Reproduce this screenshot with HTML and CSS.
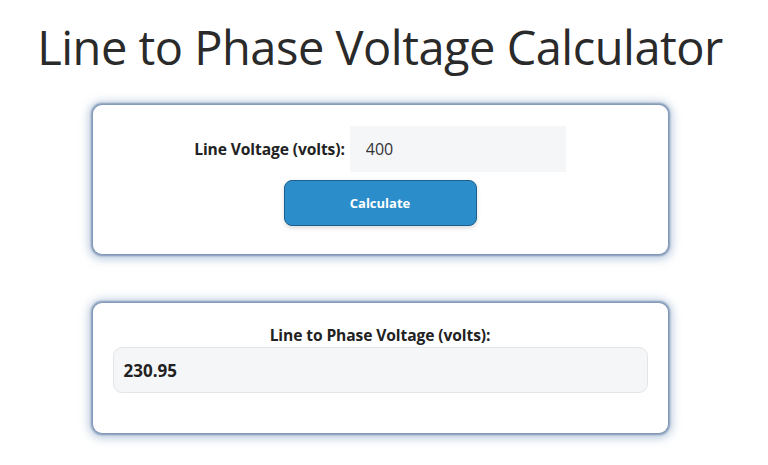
FILE: index.html
```html
<!DOCTYPE html>
<html>
<head>
<meta charset="utf-8">
<link rel="stylesheet" href="styles.css">
</head>
<body>
<h1 class="title">Line to Phase Voltage Calculator</h1>
<div class="card input-card">
  <div class="row">
    <label class="label" for="lv">Line Voltage (volts):</label>
    <input id="lv" class="field" type="text" value="400">
  </div>
  <button class="btn">Calculate</button>
</div>
<div class="card result-card">
  <div class="result-label">Line to Phase Voltage (volts):</div>
  <div class="result-box">230.95</div>
</div>
</body>
</html>
```
FILE: styles.css
```css
html, body {
  margin: 0;
  padding: 0;
  background: #ffffff;
}
body {
  font-family: "Open Sans", "Noto Sans", sans-serif;
  color: #222;
  padding-right: 8px;
  padding-bottom: 20px;
}
.title {
  margin: 0;
  padding-top: 18px;
  text-align: center;
  font-weight: 400;
  font-size: 47px;
  line-height: 58px;
  color: #2a2a2a;
  letter-spacing: -0.5px;
}
.card {
  width: 575px;
  margin: 0 auto;
  background: #fff;
  border-radius: 9px;
  box-shadow: 0 0 2px 2px rgba(110, 135, 170, 0.8), 0 1px 10px 4px rgba(130, 158, 195, 0.55);
  box-sizing: border-box;
}
.input-card {
  margin-top: 29px;
  height: 149px;
  padding-top: 21px;
  display: flex;
  flex-direction: column;
  align-items: center;
}
.row {
  display: flex;
  align-items: center;
}
.label {
  font-weight: 700;
  font-size: 15.6px;
  margin-right: 5px;
  color: #222;
  letter-spacing: -0.1px;
}
.field {
  width: 216px;
  height: 46px;
  box-sizing: border-box;
  border: none;
  background: #f5f6f8;
  font-family: inherit;
  font-size: 16px;
  color: #333;
  padding: 0 16px;
  outline: none;
}
.btn {
  margin-top: 8px;
  width: 193px;
  height: 46px;
  background: #2b8ecb;
  border: 1px solid #1d5f8e;
  border-radius: 8px;
  color: #fff;
  font-family: inherit;
  font-weight: 700;
  font-size: 13px;
  box-shadow: 0 2px 4px rgba(0, 0, 0, 0.15);
}
.result-card {
  margin-top: 49px;
  height: 130px;
  padding: 21px 20px 0;
}
.result-label {
  text-align: center;
  font-weight: 700;
  font-size: 15.6px;
  line-height: 22px;
  color: #222;
  letter-spacing: -0.1px;
}
.result-box {
  margin-top: 1px;
  height: 46px;
  box-sizing: border-box;
  background: #f5f6f8;
  border: 1px solid #e3e5e8;
  border-radius: 9px;
  display: flex;
  align-items: center;
  padding-left: 10px;
  font-weight: 700;
  font-size: 17px;
  color: #222;
}
```
